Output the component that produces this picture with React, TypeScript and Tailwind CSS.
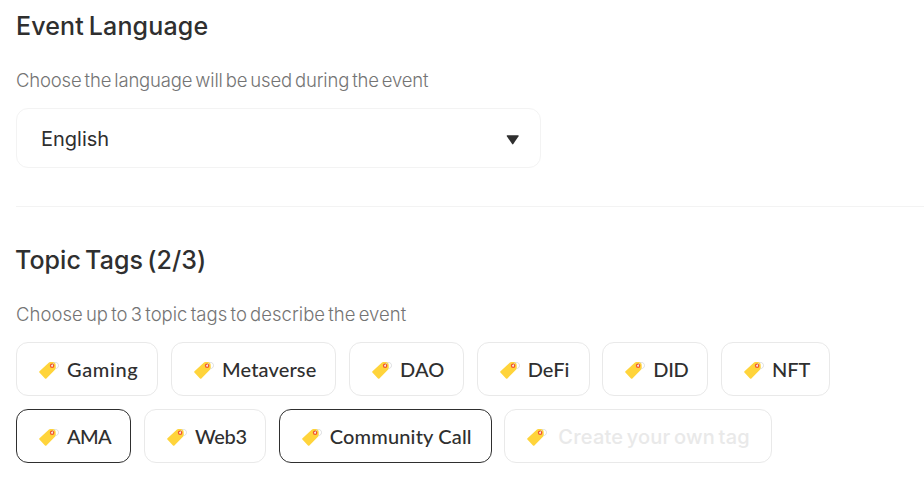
import clsx from "clsx";

type Tag = {
  label: string;
  selected?: boolean;
  // box width and letter spacing
  className: string;
};

const TAGS: Tag[] = [
  { label: "Gaming", className: "w-[142.2px] tracking-[0.65px]" },
  { label: "Metaverse", className: "w-[165.2px] tracking-[0.15px]" },
  { label: "DAO", className: "w-[114.9px] tracking-[0.1px]" },
  { label: "DeFi", className: "w-[112.85px] tracking-[0.1px]" },
  { label: "DID", className: "w-[105.8px] tracking-[-0.3px]" },
  { label: "NFT", className: "w-[108.9px] tracking-[0px]" },
  { label: "AMA", selected: true, className: "w-[115.2px] tracking-[-0.6px]" },
  { label: "Web3", className: "w-[122px] tracking-[-0.3px]" },
  {
    label: "Community Call",
    selected: true,
    className: "w-[212.75px] tracking-[0.15px]",
  },
];

function TagIcon() {
  return (
    <svg className="mt-0.5 h-5 w-5 shrink-0" viewBox="0 0 20 20" fill="none">
      <path
        d="M9.7 2.8Q10.4 2.2 11.3 2.1L14 2Q16.4 2 16.6 4.2L16.8 7.8Q16.8 8.8 16.2 9.4L7.4 18.4Q6.7 19 6 18.4L.4 12.5Q-.1 11.9 .5 11.3Z"
        fill="#FFD43B"
      />
      <circle cx="13.1" cy="5.7" r="1.6" fill="#fff" stroke="#F2552C" strokeWidth="1.3" />
      <path
        d="M13.1 5.7C13.9 3.7 15 2.5 16.6 2.5C18.4 2.5 19.5 3.9 19.5 5.6C19.4 7.4 18 8.7 16.4 8.5"
        stroke="#D3D5D8"
        strokeWidth="0.8"
      />
    </svg>
  );
}

function TagChip({ label, selected, className }: Tag) {
  return (
    <button
      type="button"
      className={clsx(
        "flex h-[54px] items-center gap-2 rounded-xl border pl-[22px] font-['Lato',sans-serif] text-[20px] font-medium whitespace-nowrap text-[#2f2f2f]",
        selected ? "border-[#2f2f2f]" : "border-[#e9e9e9]",
        className
      )}
    >
      <TagIcon />
      <span>{label}</span>
    </button>
  );
}

export default function App() {
  return (
    <div className="h-[488px] overflow-hidden bg-white pl-4 font-['Inter',sans-serif] text-[#2f2f2f]">
      <section className="h-[207px] border-b border-[#f3f3f3] pt-2.5">
        <h2 className="text-[25px] leading-8 font-medium tracking-[0.15px] [word-spacing:-2px]">
          Event Language
        </h2>
        <p className="mt-[26px] text-[18.5px] leading-6 font-light tracking-[-0.17px] text-[#747474] [word-spacing:-2px]">
          Choose the language will be used during the event
        </p>
        <button
          type="button"
          className="mt-4 flex h-[60px] w-[525px] items-center justify-between rounded-xl border border-[#f3f3f3] pt-0.5 pr-5 pl-6 text-[20px]"
        >
          <span>English</span>
          <svg className="mt-0.5 h-2.5 w-3.5" viewBox="0 0 14 10">
            <path
              d="M1.2.3h11q.9 0 .4.9L7.3 9.1Q6.7 9.9 6.1 9.1L.8 1.2Q.3.3 1.2.3Z"
              fill="#2f2f2f"
            />
          </svg>
        </button>
      </section>

      <section className="pt-[37px]">
        <h2 className="-ml-px text-[25px] leading-8 font-medium tracking-[0.05px] [word-spacing:-2.5px]">
          Topic Tags (2/3)
        </h2>
        <p className="mt-[26px] text-[18.5px] leading-6 font-light tracking-[0.02px] text-[#747474] [word-spacing:-2px]">
          Choose up to 3 topic tags to describe the event
        </p>
        <div className="mt-4 flex w-[840px] flex-wrap gap-x-[12.8px] gap-y-[13px]">
          {TAGS.map((tag) => (
            <TagChip key={tag.label} {...tag} />
          ))}
          <label className="flex h-[54px] w-[267.4px] items-center gap-2 rounded-xl border border-[#e9e9e9] pl-[22px]">
            <TagIcon />
            <input
              type="text"
              placeholder="Create your own tag"
              className="mt-0.5 ml-[3px] w-[200px] text-[20px] font-medium tracking-[0.2px] outline-none [word-spacing:-2px] placeholder:text-[#e9e9e9]"
            />
          </label>
        </div>
      </section>
    </div>
  );
}
